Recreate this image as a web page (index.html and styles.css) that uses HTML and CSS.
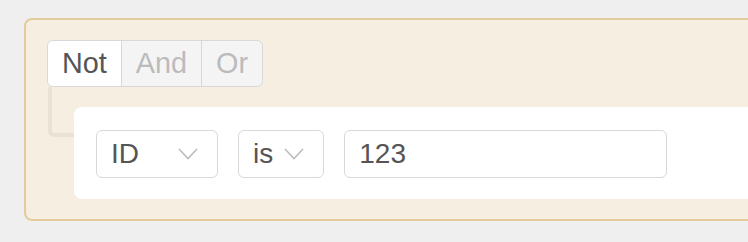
FILE: index.html
```html
<!DOCTYPE html>
<html>
<head>
<meta charset="utf-8">
<link rel="stylesheet" href="styles.css">
</head>
<body>
<div class="panel">
  <div class="combinators">
    <span class="comb active">Not</span>
    <span class="comb">And</span>
    <span class="comb">Or</span>
  </div>
  <div class="rule">
    <div class="select select-field">
      <span>ID</span>
      <svg class="chev" width="20" height="12" viewBox="0 0 20 12"><path d="M1 1 L10 10.5 L19 1" fill="none" stroke="#bdbdbd" stroke-width="1.6"/></svg>
    </div>
    <div class="select">
      <span>is</span>
      <svg class="chev" width="20" height="12" viewBox="0 0 20 12"><path d="M1 1 L10 10.5 L19 1" fill="none" stroke="#bdbdbd" stroke-width="1.6"/></svg>
    </div>
    <div class="input">123</div>
  </div>
</div>
</body>
</html>
```

FILE: styles.css
```css
html, body {
  margin: 0;
  padding: 0;
}
body {
  background: #efefef;
  font-family: "Liberation Sans", Arial, sans-serif;
  font-size: 28px;
  overflow: hidden;
  width: 748px;
  height: 242px;
}
.panel {
  margin: 18px -40px 0 24px;
  background: #f5eee1;
  border: 2px solid #e2cc9d;
  border-radius: 8px;
  padding: 20px 0 20px 21px;
}
.combinators {
  display: inline-flex;
  border: 1px solid #d8d8d8;
  border-radius: 6px;
  background: #f4f4f4;
  overflow: hidden;
}
.comb {
  display: block;
  height: 45px;
  line-height: 45px;
  padding: 0 14px;
  font-size: 28.8px;
  color: #bbbbbb;
}
.comb + .comb {
  border-left: 1px solid #d8d8d8;
}
.comb.active {
  background: #ffffff;
  color: #555555;
}
.rule {
  position: relative;
  margin: 20px 0 0 27px;
  background: #ffffff;
  border-radius: 8px;
  padding: 23px 22px 21px;
  display: flex;
  gap: 20px;
}
.rule::before {
  content: "";
  position: absolute;
  left: -26px;
  top: -20px;
  width: 22px;
  height: 46px;
  border-left: 4px solid #e9e2d3;
  border-bottom: 4px solid #e9e2d3;
  border-bottom-left-radius: 6px;
}
.select, .input {
  box-sizing: border-box;
  height: 48px;
  border: 1px solid #d9d9d9;
  border-radius: 6px;
  color: #555555;
  display: flex;
  align-items: center;
}
.select {
  justify-content: space-between;
  gap: 11px;
  padding: 0 19px 0 14px;
}
.select-field {
  width: 122px;
}
.chev {
  display: block;
}
.input {
  width: 323px;
  padding: 0 14px;
}
```
